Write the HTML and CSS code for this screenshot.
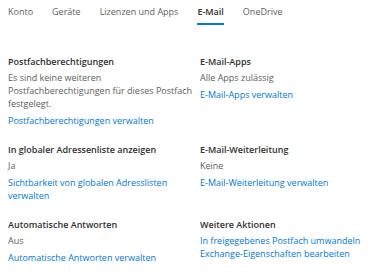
FILE: index.html
```html
<!DOCTYPE html>
<html lang="de">
<head>
<meta charset="utf-8">
<link rel="stylesheet" href="styles.css">
</head>
<body>
<nav class="tabs">
  <span class="tab">Konto</span>
  <span class="tab">Geräte</span>
  <span class="tab">Lizenzen und Apps</span>
  <span class="tab active">E-Mail</span>
  <span class="tab">OneDrive</span>
</nav>
<main class="grid">
  <section class="sec">
    <h3>Postfachberechtigungen</h3>
    <p class="val">Es sind keine weiteren Postfachberechtigungen für dieses Postfach festgelegt.</p>
    <a class="link">Postfachberechtigungen verwalten</a>
  </section>
  <section class="sec">
    <h3>E-Mail-Apps</h3>
    <p class="val">Alle Apps zulässig</p>
    <a class="link">E-Mail-Apps verwalten</a>
  </section>
  <section class="sec">
    <h3>In globaler Adressenliste anzeigen</h3>
    <p class="val">Ja</p>
    <a class="link">Sichtbarkeit von globalen Adresslisten verwalten</a>
  </section>
  <section class="sec">
    <h3>E-Mail-Weiterleitung</h3>
    <p class="val">Keine</p>
    <a class="link">E-Mail-Weiterleitung verwalten</a>
  </section>
  <section class="sec">
    <h3>Automatische Antworten</h3>
    <p class="val">Aus</p>
    <a class="link">Automatische Antworten verwalten</a>
  </section>
  <section class="sec">
    <h3>Weitere Aktionen</h3>
    <a class="link">In freigegebenes Postfach umwandeln</a>
    <a class="link">Exchange-Eigenschaften bearbeiten</a>
  </section>
</main>
</body>
</html>
```
FILE: styles.css
```css
* { box-sizing: border-box; }
html, body { margin: 0; padding: 0; background: #ffffff; }
body {
  font-family: "Open Sans", "Noto Sans", sans-serif;
  font-size: 9px;
  color: #323130;
  padding: 0 8px;
}
.tabs {
  display: flex;
  gap: 19px;
  padding-top: 5px;
}
.tab {
  color: #605e5c;
  line-height: 14px;
  padding-bottom: 4px;
  border-bottom: 2px solid transparent;
}
.tab.active {
  color: #323130;
  font-weight: 600;
  border-bottom-color: #0078d4;
}
.grid {
  display: grid;
  grid-template-columns: 192px 1fr;
  row-gap: 16px;
  padding-top: 30px;
}
.sec {
  display: flex;
  flex-direction: column;
  align-items: flex-start;
  line-height: 13px;
}
.sec h3 {
  margin: 0 0 3px;
  font-size: 9px;
  font-weight: 600;
  color: #323130;
}
.val {
  margin: 0 0 4px;
  color: #605e5c;
  padding-right: 4px;
}
.link {
  color: #0078d4;
  cursor: pointer;
}
```
